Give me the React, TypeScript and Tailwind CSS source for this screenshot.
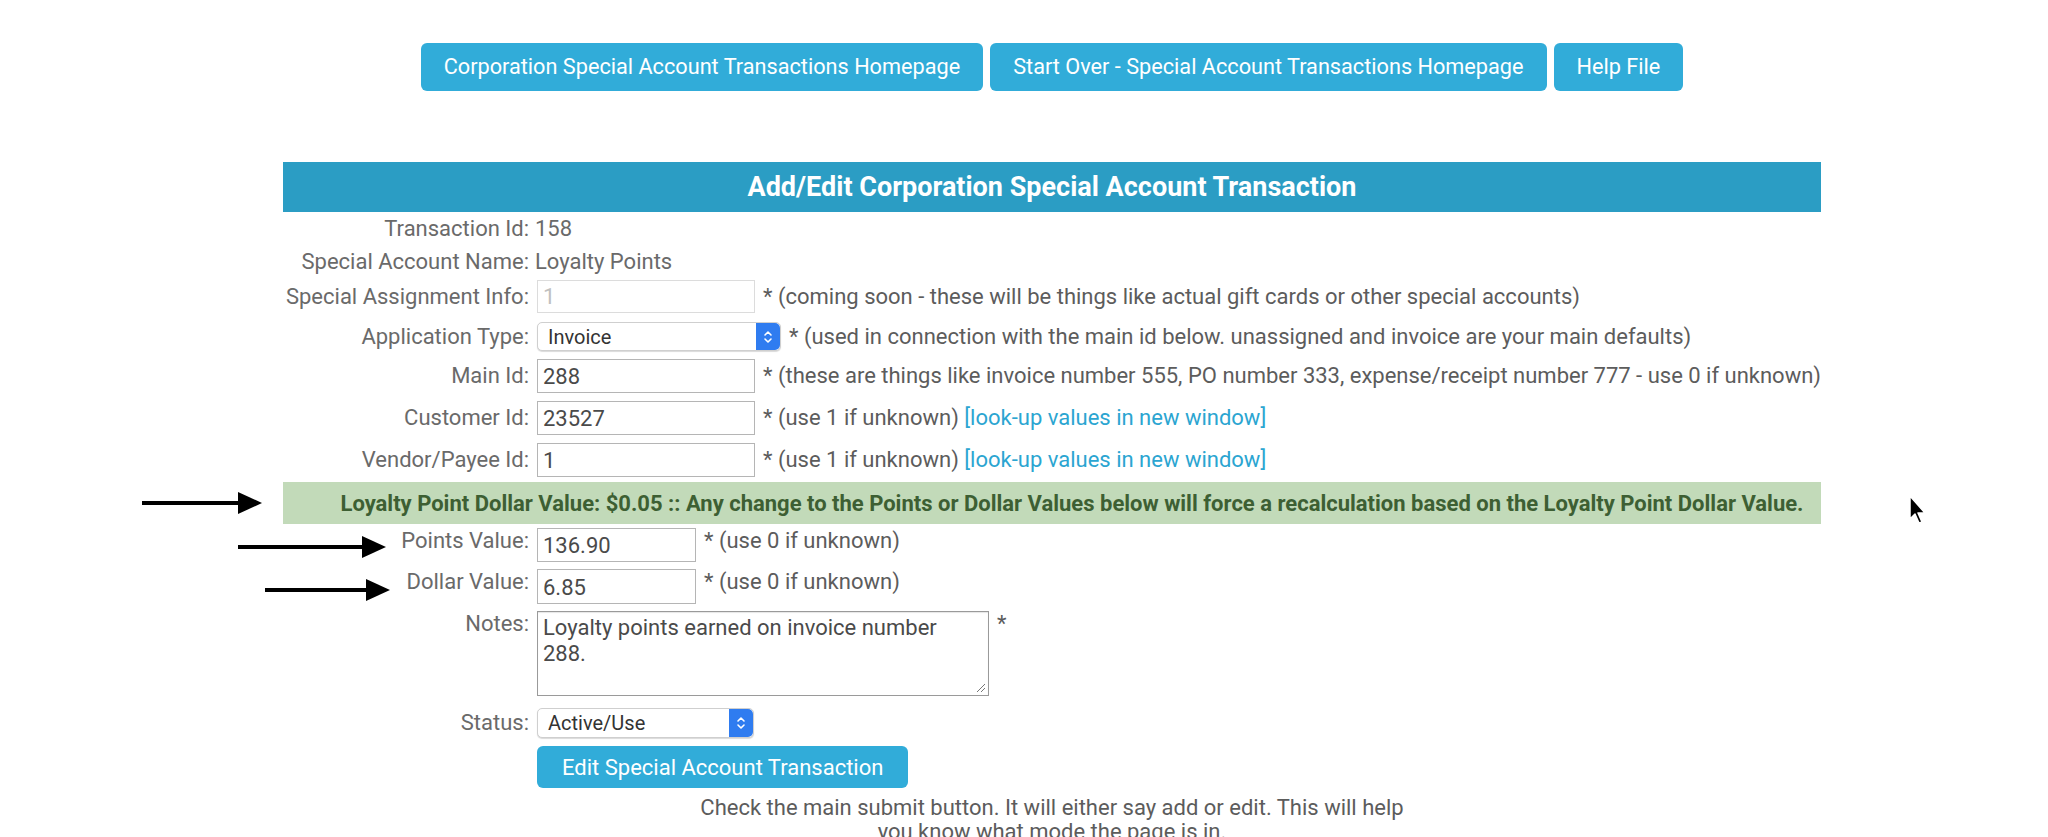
import React from 'react';

const FONT = "font-['Roboto','Liberation_Sans',sans-serif]";

function TopButton({ children }: { children: React.ReactNode }) {
  return (
    <div className="flex h-[48px] items-center rounded-[6px] bg-[#31acd9] px-[23px] text-[21.7px] text-white">
      {children}
    </div>
  );
}

function Label({ children, top }: { children: React.ReactNode; top?: boolean }) {
  return (
    <div
      className={`w-[246px] shrink-0 text-right text-[22px] leading-[26px] text-[#6a6a6a] ${top ? 'self-start' : ''}`}
    >
      {children}
    </div>
  );
}

function TextBox({ value, width, disabled }: { value: string; width: string; disabled?: boolean }) {
  return (
    <div
      className={`flex h-full items-end border pb-[2px] pl-[5px] text-[22px] leading-[26px] ${width} ${
        disabled ? 'border-[#dcdcdc] text-[#c0c0c0]' : 'border-[#b5b5b5] text-[#4a4a4a]'
      }`}
    >
      {value}
    </div>
  );
}

function Stepper() {
  return (
    <div className="flex h-full w-[24px] items-center justify-center rounded-r-[5px] bg-[#2f7cf0]">
      <svg width="10" height="16" viewBox="0 0 10 16" fill="none" stroke="white" strokeWidth="1.6" strokeLinecap="round" strokeLinejoin="round">
        <path d="M2 6 L5 3 L8 6" />
        <path d="M2 10 L5 13 L8 10" />
      </svg>
    </div>
  );
}

function SelectBox({ value, width }: { value: string; width: string }) {
  return (
    <div className={`flex h-full items-center rounded-[5px] border border-[#cfcfcf] bg-white shadow-[0_1px_1px_rgba(0,0,0,0.15)] ${width}`}>
      <div className="flex-1 pl-[10px] text-[20px] text-[#333]">{value}</div>
      <Stepper />
    </div>
  );
}

function Hint({ children }: { children: React.ReactNode }) {
  return <div className="whitespace-nowrap text-[22px] leading-[26px] text-[#5c5c5c]">{children}</div>;
}

function LookUp() {
  return <span className="text-[#2ba5d1]">[look-up values in new window]</span>;
}

function Arrow({ className, width }: { className: string; width: number }) {
  return (
    <svg className={`absolute ${className}`} width={width} height="24" viewBox={`0 0 ${width} 24`}>
      <rect x="0" y="10" width={width - 20} height="4" fill="#000" />
      <polygon points={`${width - 24},1 ${width},12 ${width - 24},23`} fill="#000" />
    </svg>
  );
}

export default function App() {
  return (
    <div className={`relative h-[837px] w-[2048px] overflow-hidden bg-white ${FONT}`}>
      <div className="ml-[283px] w-[1538px] pt-[43px]">
        <div className="flex justify-center gap-[7px]">
          <TopButton>Corporation Special Account Transactions Homepage</TopButton>
          <TopButton>Start Over - Special Account Transactions Homepage</TopButton>
          <TopButton>Help File</TopButton>
        </div>

        <div className="mt-[71px] flex h-[50px] items-center justify-center bg-[#2b9dc4] text-[27px] font-bold text-white">
          Add/Edit Corporation Special Account Transaction
        </div>

        <div className="flex flex-col">
          <div className="flex h-[33px] items-center gap-[8px]">
            <Label>Transaction Id:</Label>
            <div className="-ml-[2px] text-[22px] text-[#6a6a6a]">158</div>
          </div>
          <div className="flex h-[33px] items-center gap-[8px]">
            <Label>Special Account Name:</Label>
            <div className="-ml-[2px] text-[22px] text-[#6a6a6a]">Loyalty Points</div>
          </div>
          <div className="mt-[2px] flex h-[33px] items-center gap-[8px]">
            <Label>Special Assignment Info:</Label>
            <TextBox value="1" width="w-[218px]" disabled />
            <Hint>* (coming soon - these will be things like actual gift cards or other special accounts)</Hint>
          </div>
          <div className="mt-[9px] flex h-[29px] items-center gap-[8px]">
            <Label>Application Type:</Label>
            <SelectBox value="Invoice" width="w-[244px]" />
            <Hint>* (used in connection with the main id below. unassigned and invoice are your main defaults)</Hint>
          </div>
          <div className="mt-[8px] flex h-[34px] items-center gap-[8px]">
            <Label>Main Id:</Label>
            <TextBox value="288" width="w-[218px]" />
            <Hint>* (these are things like invoice number 555, PO number 333, expense/receipt number 777 - use 0 if unknown)</Hint>
          </div>
          <div className="mt-[8px] flex h-[34px] items-center gap-[8px]">
            <Label>Customer Id:</Label>
            <TextBox value="23527" width="w-[218px]" />
            <Hint>
              * (use 1 if unknown) <LookUp />
            </Hint>
          </div>
          <div className="mt-[8px] flex h-[34px] items-center gap-[8px]">
            <Label>Vendor/Payee Id:</Label>
            <TextBox value="1" width="w-[218px]" />
            <Hint>
              * (use 1 if unknown) <LookUp />
            </Hint>
          </div>

          <div className="mt-[5px] flex h-[42px] items-center justify-center bg-[#c2dab9] pl-[40px] text-[22px] font-bold text-[#3d5f33]">
            Loyalty Point Dollar Value: $0.05 :: Any change to the Points or Dollar Values below will force a recalculation based on the Loyalty Point Dollar Value.
          </div>

          <div className="mt-[4px] flex h-[34px] items-start gap-[8px]">
            <Label>Points Value:</Label>
            <TextBox value="136.90" width="w-[159px]" />
            <Hint>* (use 0 if unknown)</Hint>
          </div>
          <div className="mt-[7px] flex h-[35px] items-start gap-[8px]">
            <Label>Dollar Value:</Label>
            <TextBox value="6.85" width="w-[159px]" />
            <Hint>* (use 0 if unknown)</Hint>
          </div>
          <div className="mt-[7px] flex h-[85px] items-start gap-[8px]">
            <Label top>Notes:</Label>
            <div className="relative h-full w-[452px] border border-[#9a9a9a] px-[5px] pt-[3px] text-[22px] leading-[26px] text-[#4a4a4a] shadow-[inset_0_1px_1px_rgba(0,0,0,0.1)]">
              Loyalty points earned on invoice number
              <br />
              288.
              <svg className="absolute bottom-[2px] right-[2px]" width="10" height="10" viewBox="0 0 10 10" stroke="#777" strokeWidth="1">
                <path d="M1 9 L9 1" />
                <path d="M5 9 L9 5" />
              </svg>
            </div>
            <Hint>*</Hint>
          </div>
          <div className="mt-[12px] flex h-[30px] items-center gap-[8px]">
            <Label>Status:</Label>
            <SelectBox value="Active/Use" width="w-[217px]" />
          </div>
          <div className="mt-[8px] flex gap-[8px]">
            <div className="w-[246px] shrink-0" />
            <div className="flex h-[42px] items-center rounded-[6px] bg-[#31acd9] px-[25px] text-[22px] text-white">
              Edit Special Account Transaction
            </div>
          </div>
          <div className="mx-auto mt-[8px] w-[740px] text-center text-[22px] leading-[24px] text-[#5c5c5c]">
            Check the main submit button. It will either say add or edit. This will help
            <br />
            you know what mode the page is in.
          </div>
        </div>
      </div>

      <Arrow className="left-[142px] top-[491px]" width={120} />
      <Arrow className="left-[238px] top-[535px]" width={148} />
      <Arrow className="left-[265px] top-[578px]" width={125} />

      <svg className="absolute left-[1908px] top-[495px]" width="20" height="30" viewBox="0 0 20 30">
        <path d="M2 1 L2 24 L7 19 L11 28 L14 27 L10 18 L17 18 Z" fill="#000" stroke="#fff" strokeWidth="1.5" strokeLinejoin="round" />
      </svg>
    </div>
  );
}
